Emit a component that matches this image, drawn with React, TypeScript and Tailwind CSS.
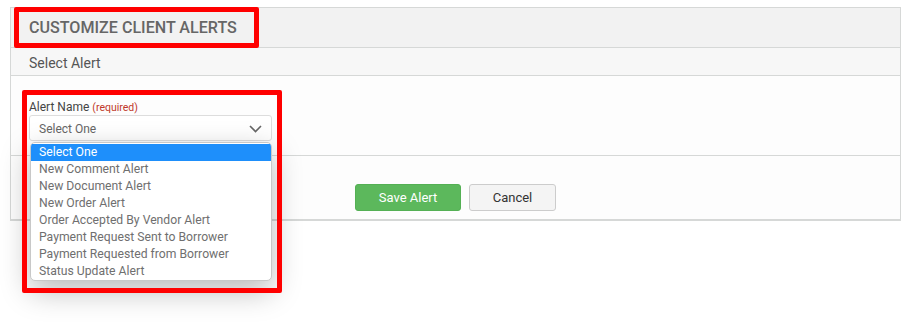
import React from "react";

const items = [
  "Select One",
  "New Comment Alert",
  "New Document Alert",
  "New Order Alert",
  "Order Accepted By Vendor Alert",
  "Payment Request Sent to Borrower",
  "Payment Requested from Borrower",
  "Status Update Alert",
];

export default function App() {
  return (
    <div className="relative w-[916px] h-[324px] bg-white overflow-hidden font-['Roboto','Liberation_Sans',sans-serif]">
      <div className="pt-[7px] pl-[10px]">
        <div className="w-[891px] border border-[#d6d8d7] border-b-2 bg-[#fdfdfd]">
          <div className="h-[40px] bg-[#f2f2f2] border-b border-[#d6d8d7] px-[18px] pt-[2px] flex items-center text-[16.1px] font-medium text-[#666]">
            CUSTOMIZE CLIENT ALERTS
          </div>
          <div className="h-[28px] bg-[#f7f7f7] border-b border-[#d6d8d7] px-[18px] pt-[3px] flex items-center text-[14px] text-[#555]">
            Select Alert
          </div>
          <div className="h-[80px] border-b border-[#d6d8d7] px-[18px] pt-[24px]">
            <div className="text-[12px] leading-[14px] text-[#444]">
              Alert Name <span className="text-[10.5px] text-[#c0392b]">(required)</span>
            </div>
            <div className="w-[243px] h-[26px] border border-[#ddd] rounded-[3px] bg-white flex items-center justify-between pl-[9px] pr-[9px] pt-[2px] text-[12px] text-[#666]">
              <span>Select One</span>
              <svg width="13" height="8" viewBox="0 0 13 8" fill="none">
                <path d="M1 1l5.5 5.5L12 1" stroke="#666" strokeWidth="1.6" />
              </svg>
            </div>
          </div>
          <div className="h-[63px] flex justify-center gap-[8px] pt-[28px]">
            <button className="w-[106px] h-[27px] bg-[#5cb85c] border border-[#54b054] rounded-[3px] text-white text-[13px] pt-[1px]">
              Save Alert
            </button>
            <button className="w-[87px] h-[27px] bg-[#f4f4f4] border border-[#ccc] rounded-[3px] text-[#333] text-[13px] pt-[1px]">
              Cancel
            </button>
          </div>
        </div>
      </div>

      <div className="absolute left-[30px] top-[142px] w-[242px] bg-white rounded-[5px] border border-[#c8c8c8] pt-[1px] overflow-hidden shadow-[0_10px_30px_rgba(0,0,0,0.28)]">
        {items.map((t, i) => (
          <div
            key={t}
            className={
              i === 0
                ? "h-[17px] leading-[17px] px-[8px] text-[12.2px] bg-[#1e8ffb] text-white"
                : "h-[17px] leading-[17px] px-[8px] text-[12.2px] text-[#6f6f6f]"
            }
          >
            {t}
          </div>
        ))}
      </div>

      <div className="absolute left-[14px] top-[7px] w-[245px] h-[41px] border-[5px] border-[#ff0000] rounded-[2px]" />
      <div className="absolute left-[22px] top-[90px] w-[260px] h-[203px] border-[5px] border-[#ff0000] rounded-[2px]" />
    </div>
  );
}
